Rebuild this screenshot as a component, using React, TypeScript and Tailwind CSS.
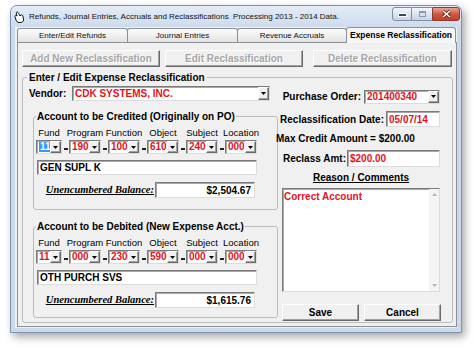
import React from "react";

const sunken =
  "bg-white border border-t-[#7a7a7a] border-l-[#7a7a7a] border-r-[#dcdcdc] border-b-[#dcdcdc] shadow-[inset_1px_1px_0_#a8a8a8]";
const raised =
  "bg-[#f0f0f0] border border-t-white border-l-white border-r-[#6a6a6a] border-b-[#6a6a6a] shadow-[inset_-1px_-1px_0_#a0a0a0]";
const red = "text-[#e3121b]";

function Arrow({ color = "#000" }: { color?: string }) {
  return (
    <svg width="5" height="3" viewBox="0 0 5 3">
      <path d="M0 0H5L2.5 3Z" fill={color} />
    </svg>
  );
}

function DropBtn() {
  return (
    <div className={`w-[11px] h-full flex items-center justify-center ${raised}`}>
      <Arrow />
    </div>
  );
}

function Combo(props: { value: string; className: string; highlight?: boolean }) {
  return (
    <div className={`flex ${props.className} ${sunken} ${props.highlight ? "bg-[#ffffd0]" : ""}`}>
      <div className={`flex-1 flex items-center pl-[2px] text-[10px] font-bold leading-none overflow-hidden whitespace-nowrap ${red}`}>
        {props.highlight ? <span className="bg-[#3399ff] text-white px-[1px]">{props.value}</span> : props.value}
      </div>
      <DropBtn />
    </div>
  );
}

function Button(props: { className: string; disabled?: boolean; children: React.ReactNode }) {
  return (
    <div
      className={`h-[17px] flex items-center justify-center text-[10px] font-bold ${raised} ${props.className} ${
        props.disabled ? "text-[#a6a6a6] [text-shadow:1px_1px_0_#fff]" : "text-black"
      }`}
    >
      {props.children}
    </div>
  );
}

const cells = [
  { label: "Fund", w: "w-[26px]" },
  { label: "Program", w: "w-[32px]" },
  { label: "Function", w: "w-[32px]" },
  { label: "Object", w: "w-[32px]" },
  { label: "Subject", w: "w-[32px]" },
  { label: "Location", w: "w-[32px]" },
];

function AccountGroup(props: {
  legend: string;
  values: string[];
  desc: string;
  balance: string;
  highlight?: boolean;
  className: string;
}) {
  return (
    <fieldset className={`ml-[4px] w-[245px] border border-[#bcbcbc] rounded-[3px] ${props.className}`}>
      <legend className="ml-[2px] px-[1px] text-[10px] font-bold leading-[13px]">{props.legend}</legend>
      <div className="pl-[2px]">
        <div className="mt-[4px] flex h-[12px]">
          {cells.map((c, i) => (
            <React.Fragment key={c.label}>
              {i > 0 && <div className="w-[7px]" />}
              <div className={`${c.w} flex justify-center text-[9.5px] leading-[12px] whitespace-nowrap`}>{c.label}</div>
            </React.Fragment>
          ))}
        </div>
        <div className="mt-[1px] flex h-[14px]">
          {cells.map((c, i) => (
            <React.Fragment key={c.label}>
              {i > 0 && (
                <div className="w-[7px] flex justify-center items-center">
                  <div className="w-[4px] h-[2px] bg-[#222] mt-[4px]" />
                </div>
              )}
              <Combo value={props.values[i]} className={`${c.w} h-[14px]`} highlight={i === 0 && props.highlight} />
            </React.Fragment>
          ))}
        </div>
        <div className={`mt-[6px] ml-[1px] w-[220px] h-[15px] flex items-center pl-[2px] text-[10px] font-bold ${sunken}`}>
          {props.desc}
        </div>
        <div className="mt-[7px] flex h-[16px] -ml-[2px]">
          <div className="w-[121px] flex items-center justify-end pr-[1px] font-['Liberation_Serif',serif] text-[10.5px] font-bold italic underline">
            Unencumbered Balance:
          </div>
          <div className={`w-[100px] flex items-center justify-end pr-[3px] text-[10px] font-bold ${sunken}`}>{props.balance}</div>
        </div>
      </div>
    </fieldset>
  );
}

function TitleBar() {
  return (
    <div className="h-[21px] flex items-center pl-[2px] pr-[1px] bg-gradient-to-b from-[#e4ecf7] to-[#cedbec] rounded-t-[6px]">
      <svg width="11" height="12" viewBox="0 0 11 12" className="ml-[1px]">
        <path
          d="M3 1c1 0 1.5 1 2 2l1 2 1-1c.8-.5 1.6 0 1.8.8L9.5 8c.3 1.5-.5 3-2 3.3L5 11.5C3.5 11.5 2.5 10.5 2 9L1 5.5C.8 4.8 1.3 4.2 2 4.3L3 5 2.3 2.2C2.2 1.5 2.5 1 3 1z"
          fill="#fff"
          stroke="#111"
          strokeWidth="1"
        />
      </svg>
      <span className="ml-[4px] text-[8px] whitespace-pre text-[#111]">
        Refunds, Journal Entries, Accruals and Reclassifications  Processing 2013 - 2014 Data.
      </span>
      <div className="flex-1" />
      <div className="self-start mt-[1px] flex h-[14px]">
        <div className="w-[20px] h-full border border-[#7f8fa6] rounded-l-[3px] bg-gradient-to-b from-[#f2f6fb] to-[#c7d4e5] flex items-end justify-center pb-[3px]">
          <div className="w-[7px] h-[2px] bg-[#444] border border-white box-content" />
        </div>
        <div className="w-[20px] h-full border-y border-[#7f8fa6] bg-gradient-to-b from-[#f2f6fb] to-[#c7d4e5] flex items-center justify-center">
          <div className="w-[7px] h-[6px] border border-[#8a9ab0] border-t-2" />
        </div>
        <div className="w-[28px] h-full border border-[#8e3a30] rounded-r-[3px] bg-gradient-to-b from-[#e9a391] via-[#d0573e] to-[#c0412b] flex items-center justify-center">
          <svg width="9" height="8" viewBox="0 0 9 8">
            <path d="M1 1L8 7M8 1L1 7" stroke="#5a1d14" strokeWidth="3" />
            <path d="M1 1L8 7M8 1L1 7" stroke="#fff" strokeWidth="1.6" />
          </svg>
        </div>
      </div>
    </div>
  );
}

function Tabs() {
  const tabs = [
    { label: "Enter/Edit Refunds", w: "w-[111px]" },
    { label: "Journal Entries", w: "w-[111px]" },
    { label: "Revenue Accruals", w: "w-[110px]" },
  ];
  return (
    <div className="h-[15px] flex items-end">
      {tabs.map((t, i) => (
        <div
          key={t.label}
          className={`${t.w} h-[14px] ${i > 0 ? "-ml-[1px]" : ""} border border-b-0 border-[#8d9096] rounded-t-[3px] bg-gradient-to-b from-[#fdfdfd] to-[#e2e2e2] flex items-center justify-center text-[8px] text-[#111] whitespace-nowrap`}
        >
          {t.label}
        </div>
      ))}
      <div className="-ml-[1px] w-[110px] h-[16px] relative top-[1px] z-10 border border-b-0 border-[#8d9096] rounded-t-[3px] bg-[#f6f6f6] flex items-center justify-center text-[8.5px] font-bold whitespace-nowrap">
        Expense Reclassification
      </div>
    </div>
  );
}

function RightColumn() {
  return (
    <div className="flex-1 flex flex-col items-end pr-[12px] text-[10px] font-bold">
      <div className="mt-[5px] flex items-center">
        <span>Purchase Order:</span>
        <Combo value="201400340" className="ml-[3px] w-[76px] h-[14px]" />
      </div>
      <div className="mt-[7px] flex items-center">
        <span>Reclassification Date:</span>
        <div className={`ml-[2px] w-[54px] h-[16px] flex items-center pl-[2px] ${red} ${sunken}`}>05/07/14</div>
      </div>
      <div className="mt-[6px] self-start -ml-[2px] leading-[12px] whitespace-nowrap">Max Credit Amount = $200.00</div>
      <div className="mt-[5px] flex items-center">
        <span>Reclass Amt:</span>
        <div className={`ml-[1px] w-[93px] h-[17px] flex items-center pl-[2px] ${red} ${sunken}`}>$200.00</div>
      </div>
      <div className="mt-[5px] w-[158px] text-center leading-[12px] underline">Reason / Comments</div>
      <div className={`mt-[4px] w-[158px] h-[104px] flex ${sunken}`}>
        <div className={`flex-1 pl-[1px] pt-[2px] leading-[12px] ${red}`}>Correct Account</div>
        <div className="w-[10px] bg-[#f4f4f4] flex flex-col items-center justify-between py-[4px]">
          <svg width="5" height="3" viewBox="0 0 5 3">
            <path d="M0 3H5L2.5 0Z" fill="#b5b5b5" />
          </svg>
          <Arrow color="#b5b5b5" />
        </div>
      </div>
      <div className="mt-[12px] -mr-[1px] flex gap-[5px]">
        <Button className="w-[77px]">Save</Button>
        <Button className="w-[77px]">Cancel</Button>
      </div>
    </div>
  );
}

function Panel() {
  return (
    <div className="h-[285px] border border-[#8d9096] bg-[#f0f0f0] pt-[7px] pl-[4px] flex flex-col">
      <div className="flex h-[17px]">
        <Button className="w-[138px]" disabled>
          Add New Reclassification
        </Button>
        <Button className="ml-[5px] w-[138px]" disabled>
          Edit Reclassification
        </Button>
        <Button className="ml-[10px] w-[139px]" disabled>
          Delete Reclassification
        </Button>
      </div>
      <fieldset className="mt-[4px] w-[431px] h-[252px] border border-[#bcbcbc] rounded-[3px]">
        <legend className="ml-[4px] px-[2px] text-[10px] font-bold leading-[13px]">Enter / Edit Expense Reclassification</legend>
        <div className="flex pl-[6px]">
          <div className="w-[249px] flex flex-col">
            <div className="mt-[2px] flex items-center h-[15px]">
              <div className="w-[43px] text-[10px] font-bold">Vendor:</div>
              <Combo value="CDK SYSTEMS, INC." className="w-[198px] h-[15px]" />
            </div>
            <AccountGroup
              className="mt-[9px] h-[100px]"
              legend="Account to be Credited (Originally on PO)"
              values={["11", "190", "100", "610", "240", "000"]}
              desc="GEN SUPL K"
              balance="$2,504.67"
              highlight
            />
            <AccountGroup
              className="mt-[10px] h-[98px]"
              legend="Account to be Debited (New Expense Acct.)"
              values={["11", "000", "230", "590", "000", "000"]}
              desc="OTH PURCH SVS"
              balance="$1,615.76"
            />
          </div>
          <RightColumn />
        </div>
      </fieldset>
    </div>
  );
}

export default function App() {
  return (
    <div className="w-[474px] h-[350px] bg-white pt-[5px] pl-[10px] font-['Liberation_Sans',Arial,sans-serif] text-black select-none">
      <div className="w-[452px] h-[328px] flex flex-col border border-[#7f92ad] rounded-t-[7px] bg-[#cbd9ea] shadow-[3px_4px_8px_rgba(0,0,0,0.35)]">
        <TitleBar />
        <div className="mx-[4px] h-[301px] bg-[#f0f0f0] pl-[2px] flex flex-col">
          <Tabs />
          <Panel />
        </div>
      </div>
    </div>
  );
}
